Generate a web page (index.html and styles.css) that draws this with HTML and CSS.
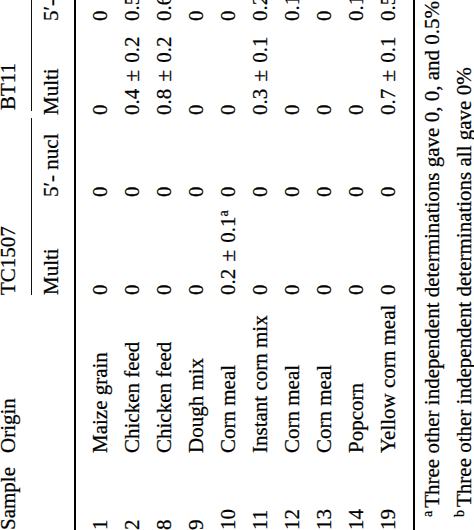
FILE: index.html
```html
<!DOCTYPE html>
<html>
<head>
<meta charset="utf-8">
<link rel="stylesheet" href="styles.css">
</head>
<body>
<div class="page">
  <div class="sheet">
    <div class="grid head">
      <div class="h-main h-sample">Sample</div>
      <div class="h-main h-origin">Origin</div>
      <div class="grp grp-tc">TC1507</div>
      <div class="grp grp-bt">BT11</div>
      <div class="sub">Multi</div>
      <div class="sub">5′- nucl</div>
      <div class="sub">Multi</div>
      <div class="sub">5′- nucl</div>
    </div>
    <div class="rule rule-thick"></div>
    <div class="grid body">
      <div>1</div><div>Maize grain</div><div>0</div><div>0</div><div>0</div><div>0</div>
      <div>2</div><div>Chicken feed</div><div>0</div><div>0</div><div>0.4 ± 0.2</div><div>0.5 ± 0.2</div>
      <div>8</div><div>Chicken feed</div><div>0</div><div>0</div><div>0.8 ± 0.2</div><div>0.6 ± 0.1</div>
      <div>9</div><div>Dough mix</div><div>0</div><div>0</div><div>0</div><div>0</div>
      <div>10</div><div>Corn meal</div><div>0.2 ± 0.1<sup>a</sup></div><div>0</div><div>0</div><div>0</div>
      <div>11</div><div>Instant corn mix</div><div>0</div><div>0</div><div>0.3 ± 0.1</div><div>0.2 ± 0.1</div>
      <div>12</div><div>Corn meal</div><div>0</div><div>0</div><div>0</div><div>0.1 ± 0.1</div>
      <div>13</div><div>Corn meal</div><div>0</div><div>0</div><div>0</div><div>0</div>
      <div>14</div><div>Popcorn</div><div>0</div><div>0</div><div>0</div><div>0.1 ± 0.1</div>
      <div>19</div><div>Yellow corn meal</div><div>0</div><div>0</div><div>0.7 ± 0.1</div><div>0.5 ± 0.1</div>
    </div>
    <div class="rule rule-bottom"></div>
    <div class="notes">
      <p class="note"><sup>a</sup>Three other independent determinations gave 0, 0, and 0.5%</p>
      <p class="note"><sup>b</sup>Three other independent determinations all gave 0%</p>
    </div>
  </div>
</div>
</body>
</html>
```

FILE: styles.css
```css
html, body {
  margin: 0;
  padding: 0;
  background: #ffffff;
  overflow: hidden;
}

.page {
  width: 474px;
  height: 530px;
  overflow: hidden;
  background: #ffffff;
}

.sheet {
  width: 530px;
  height: 474px;
  overflow: hidden;
  transform-origin: 0 0;
  transform: translateY(530px) rotate(-90deg);
  font-family: "Liberation Serif", "Times New Roman", serif;
  font-size: 21px;
  color: #000000;
  -webkit-text-stroke: 0.25px #000000;
  background: #ffffff;
}

.grid {
  display: grid;
  grid-template-columns: 77px 158px 98px 82px 94px 200px;
  width: 709px;
  white-space: nowrap;
}

.head {
  grid-template-rows: 32px auto;
}

.h-main {
  grid-row: 1 / 3;
  align-self: start;
  line-height: 16px;
}

.grp {
  grid-row: 1;
  box-sizing: border-box;
  height: 32px;
  line-height: 16px;
  border-bottom: 1px solid #111111;
}

.grp-tc {
  grid-column: 3 / 5;
  margin-right: 3px;
}

.grp-bt {
  grid-column: 5 / 7;
  margin-left: 4px;
  padding-left: 1px;
}

.sub {
  grid-row: 2;
  line-height: 20px;
  padding-top: 9px;
  padding-bottom: 13px;
}

.rule {
  width: 709px;
  background: #000000;
}

.rule-thick {
  height: 2px;
}

.body {
  line-height: 32px;
  padding-top: 8px;
  padding-bottom: 9px;
}

.body > div:nth-child(6n+3),
.body > div:nth-child(6n+4),
.body > div:nth-child(6n+5),
.body > div:nth-child(6n+6) {
  word-spacing: 2px;
}

.rule-bottom {
  height: 2px;
}

.notes {
  padding-top: 1px;
  white-space: nowrap;
}

.note {
  margin: 0;
  line-height: 32px;
  padding-left: 13px;
}

sup {
  font-size: 14px;
  line-height: 0;
  vertical-align: 7px;
}

.note sup {
  margin-right: 3px;
}
```
